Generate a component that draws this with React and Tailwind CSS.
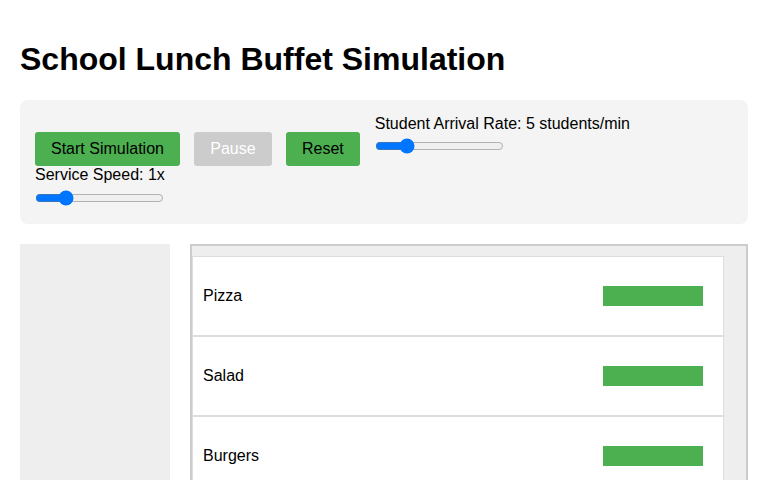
import React, { useState } from "react";

const foods = ["Pizza", "Salad", "Burgers", "Pasta"];

const App = () => {
    const [rate, setRate] = useState(5);
    const [speed, setSpeed] = useState(1);

    return (
        <div className="p-5 font-['Liberation_Sans',Arial,sans-serif] text-black bg-white min-h-screen">
            <h1 className="text-[32px] leading-[37px] font-bold mt-[21px] mb-[22px]">
                School Lunch Buffet Simulation
            </h1>
            <div className="bg-[#f4f4f4] rounded-lg p-[15px] mb-5">
                <div className="flex items-start">
                    <button className="mt-[17px] bg-[#4caf50] text-black px-4 h-[34px] rounded-[3px] text-base mr-[14px]">
                        Start Simulation
                    </button>
                    <button
                        disabled
                        className="mt-[17px] bg-[#cccccc] text-white w-[78px] h-[34px] rounded-[3px] text-base mr-[14px]"
                    >
                        Pause
                    </button>
                    <button className="mt-[17px] bg-[#4caf50] text-black px-4 h-[34px] rounded-[3px] text-base mr-[15px]">
                        Reset
                    </button>
                    <div className="flex flex-col">
                        <label className="text-base leading-[18px]">
                            Student Arrival Rate: {rate} students/min
                        </label>
                        <input
                            type="range"
                            min="1"
                            max="20"
                            value={rate}
                            onChange={(e) => setRate(Number(e.target.value))}
                            className="w-[129px] h-4 mt-[5px] accent-[#0075ff]"
                        />
                    </div>
                </div>
                <div className="flex flex-col">
                    <label className="text-base leading-[18px]">
                        Service Speed: {speed}x
                    </label>
                    <input
                        type="range"
                        min="0.5"
                        max="3"
                        step="0.5"
                        value={speed}
                        onChange={(e) => setSpeed(Number(e.target.value))}
                        className="w-[129px] h-4 mt-[6px] mb-[3px] accent-[#0075ff]"
                    />
                </div>
            </div>
            <div className="flex gap-5">
                <div className="w-[150px] bg-[#eeeeee] h-[400px] shrink-0"></div>
                <div className="flex-1 bg-[#eeeeee] border-2 border-[#cccccc] pt-[10px] h-[400px]">
                    {foods.map((food) => (
                        <div
                            key={food}
                            className="w-[532px] h-[80px] bg-white border border-[#dddddd] flex items-center justify-between pl-[10px] pr-5"
                        >
                            <span className="text-base">{food}</span>
                            <div className="w-[100px] h-5 bg-[#4caf50]"></div>
                        </div>
                    ))}
                </div>
            </div>
        </div>
    );
};

export default App;
